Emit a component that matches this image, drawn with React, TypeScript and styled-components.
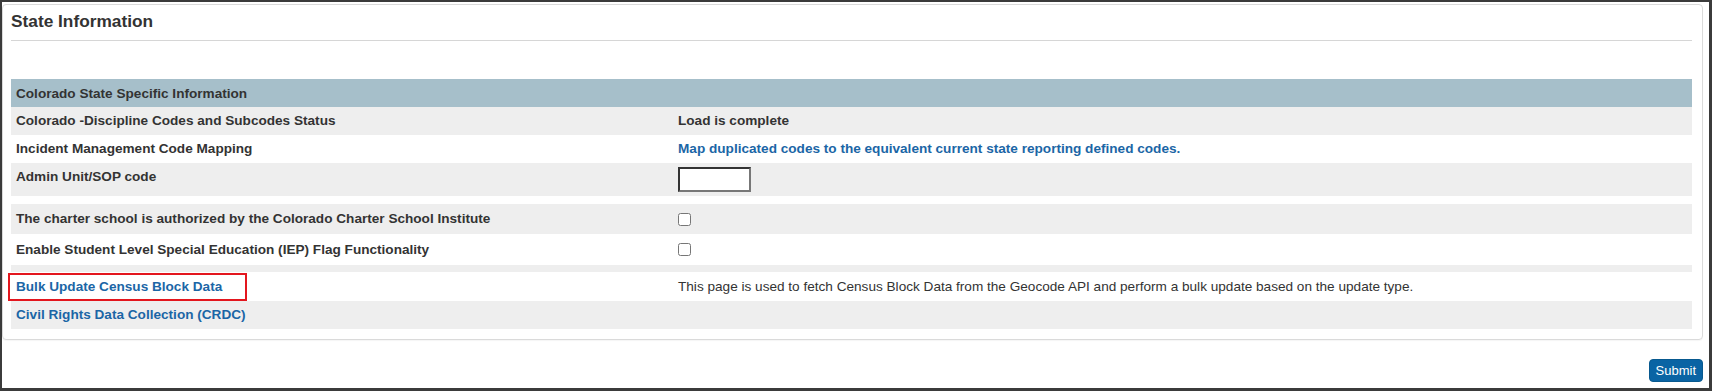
import React from "react";
import styled, { createGlobalStyle } from "styled-components";

const GlobalStyle = createGlobalStyle`
  body {
    margin: 0;
    background: #fff;
    font-family: "Liberation Sans", Arial, sans-serif;
  }
`;

type Tone = "gray" | "white";

interface InfoRow {
  label?: string;
  labelLink?: boolean;
  value?: React.ReactNode;
  tone: Tone;
  height: number;
  top?: boolean;
  highlight?: boolean;
}

const Frame = styled.div`
  box-sizing: border-box;
  width: 1712px;
  height: 391px;
  border: solid #3b3b3b;
  border-width: 2px 3px 3px 2px;
  padding: 2px 6px 0 0;
  display: flex;
  flex-direction: column;
  background: #fff;
`;

const Panel = styled.div`
  border: 1px solid #dadada;
  border-radius: 4px;
  padding: 0 10px 10px 8px;
  box-shadow: 0 1px 1px rgba(0, 0, 0, 0.04);
`;

const Heading = styled.h2`
  margin: 0 0 38px;
  padding: 6px 0 9px;
  border-bottom: 1px solid #d6d6d6;
  font-size: 17.3px;
  line-height: 20px;
  font-weight: bold;
  color: #333;
`;

const InfoTable = styled.table`
  width: 100%;
  border-collapse: collapse;
  table-layout: fixed;
  font-size: 13.6px;
  color: #333;
`;

const HeaderRow = styled.tr`
  height: 28px;
  background: #a6bfca;
`;

const HeaderCell = styled.td`
  padding: 0 5px;
  font-weight: bold;
  vertical-align: middle;
`;

const Row = styled.tr<{ $tone: Tone; $height: number }>`
  height: ${(p) => p.$height}px;
  background: ${(p) => (p.$tone === "gray" ? "#eeeeee" : "#ffffff")};
`;

const LabelCell = styled.td<{ $top?: boolean }>`
  position: relative;
  padding: ${(p) => (p.$top ? "6px 5px 0" : "0 5px")};
  font-weight: bold;
  vertical-align: ${(p) => (p.$top ? "top" : "middle")};
  line-height: 16px;
`;

const ValueCell = styled.td<{ $top?: boolean }>`
  padding: ${(p) => (p.$top ? "4px 0 0" : "0")};
  vertical-align: ${(p) => (p.$top ? "top" : "middle")};
  line-height: 16px;
`;

const Status = styled.span`
  font-weight: bold;
`;

const LinkText = styled.span`
  color: #1b66a6;
  font-weight: bold;
  cursor: pointer;
`;

const Note = styled.span`
  color: #333;
`;

const CodeInput = styled.input`
  display: block;
  box-sizing: border-box;
  width: 73px;
  height: 25px;
  margin: 0;
  border: 2px solid;
  border-color: #333 #777 #777 #333;
  background: #fff;
`;

const Check = styled.input`
  display: block;
  width: 13px;
  height: 13px;
  margin: 0;
`;

const Callout = styled.span`
  position: absolute;
  left: -3px;
  top: 1px;
  width: 239px;
  height: 28px;
  box-sizing: border-box;
  border: 2px solid #e3161e;
  pointer-events: none;
`;

const Footer = styled.div`
  display: flex;
  justify-content: flex-end;
  margin-top: 19px;
`;

const SubmitButton = styled.button`
  height: 23px;
  padding: 0 6px;
  border: 1px solid #08598f;
  border-radius: 4px;
  background: #0a64a4;
  color: #fff;
  font-family: "Liberation Sans", Arial, sans-serif;
  font-size: 13px;
  cursor: pointer;
`;

const rows: InfoRow[] = [
  { label: "Colorado -Discipline Codes and Subcodes Status", value: <Status>Load is complete</Status>, tone: "gray", height: 28 },
  {
    label: "Incident Management Code Mapping",
    value: <LinkText>Map duplicated codes to the equivalent current state reporting defined codes.</LinkText>,
    tone: "white",
    height: 28,
  },
  { label: "Admin Unit/SOP code", value: <CodeInput type="text" />, tone: "gray", height: 33, top: true },
  { tone: "white", height: 8 },
  {
    label: "The charter school is authorized by the Colorado Charter School Institute",
    value: <Check type="checkbox" />,
    tone: "gray",
    height: 30,
  },
  {
    label: "Enable Student Level Special Education (IEP) Flag Functionality",
    value: <Check type="checkbox" />,
    tone: "white",
    height: 31,
  },
  { tone: "gray", height: 7 },
  {
    label: "Bulk Update Census Block Data",
    labelLink: true,
    highlight: true,
    value: (
      <Note>
        This page is used to fetch Census Block Data from the Geocode API and perform a bulk update based on the update type.
      </Note>
    ),
    tone: "white",
    height: 29,
  },
  { label: "Civil Rights Data Collection (CRDC)", labelLink: true, tone: "gray", height: 28 },
];

const App: React.FC = () => {
  return (
    <>
      <GlobalStyle />
      <Frame>
        <Panel>
          <Heading>State Information</Heading>
          <InfoTable>
            <colgroup>
              <col style={{ width: 667 }} />
              <col />
            </colgroup>
            <tbody>
              <HeaderRow>
                <HeaderCell colSpan={2}>Colorado State Specific Information</HeaderCell>
              </HeaderRow>
              {rows.map((row, i) => (
                <Row key={i} $tone={row.tone} $height={row.height}>
                  <LabelCell $top={row.top}>
                    {row.labelLink ? <LinkText>{row.label}</LinkText> : row.label}
                    {row.highlight && <Callout />}
                  </LabelCell>
                  <ValueCell $top={row.top}>{row.value}</ValueCell>
                </Row>
              ))}
            </tbody>
          </InfoTable>
        </Panel>
        <Footer>
          <SubmitButton type="button">Submit</SubmitButton>
        </Footer>
      </Frame>
    </>
  );
};

export default App;
